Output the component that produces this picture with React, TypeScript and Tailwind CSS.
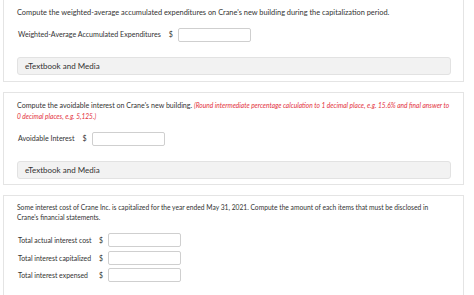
import React from "react";

const FONT = { fontFamily: "Lato, 'Open Sans', sans-serif" };

function AnswerInput() {
  return <div className="h-[14px] w-[73px] rounded-[2px] border border-[#cfcfcf] bg-white" />;
}

function MediaBox() {
  return (
    <div className="flex h-[18px] items-center rounded-[3px] border border-[#e2e2e2] bg-[#f2f2f2] px-[7px] text-[8px] text-[#333]">
      eTextbook and Media
    </div>
  );
}

const TOTALS = ["Total actual interest cost", "Total interest capitalized", "Total interest expensed"];

export default function App() {
  return (
    <div className="h-[295px] w-[474px] overflow-hidden bg-white pl-[3px] text-[7.1px] leading-[10px] text-[#333]" style={FONT}>
      {/* Part 1 */}
      <div className="w-[461px] border border-t-0 border-[#e4e4e4] pl-[13px] pr-[12px] pt-[8px] pb-[6px]">
        <p className="whitespace-nowrap text-[7.4px]">
          Compute the weighted-average accumulated expenditures on Crane's new building during the capitalization period.
        </p>
        <div className="mt-[10px] flex items-center">
          <span className="ml-[1px]">Weighted-Average Accumulated Expenditures</span>
          <span className="ml-[8px]">$</span>
          <div className="ml-[5px]">
            <AnswerInput />
          </div>
        </div>
        <div className="mt-[15px]">
          <MediaBox />
        </div>
      </div>

      {/* Part 2 */}
      <div className="mt-[10px] w-[461px] border border-[#e4e4e4] pl-[13px] pr-[12px] pt-[7px] pb-[5px]">
        <p className="whitespace-nowrap">
          Compute the avoidable interest on Crane's new building.{" "}
          <em className="text-[6.6px] text-[#e3303b]">
            (Round intermediate percentage calculation to 1 decimal place, e.g. 15.6% and final answer to
            <br />0 decimal places, e.g. 5,125.)
          </em>
        </p>
        <div className="mt-[10px] flex items-center">
          <span className="ml-[1px]">Avoidable Interest</span>
          <span className="ml-[8px]">$</span>
          <div className="ml-[5px]">
            <AnswerInput />
          </div>
        </div>
        <div className="mt-[15px]">
          <MediaBox />
        </div>
      </div>

      {/* Part 3 */}
      <div className="mt-[10px] h-[120px] w-[461px] border border-[#e4e4e4] pl-[13px] pr-[12px] pt-[6px]">
        <p className="whitespace-nowrap text-[6.7px]">
          Some interest cost of Crane Inc. is capitalized for the year ended May 31, 2021. Compute the amount of each items that must be disclosed in
          <br />
          Crane's financial statements.
        </p>
        <div className="mt-[11px] flex flex-col gap-[3.5px] text-[6.9px]">
          {TOTALS.map((label) => (
            <div key={label} className="flex items-center">
              <span className="ml-[1px] w-[81px] whitespace-nowrap">{label}</span>
              <span>$</span>
              <div className="ml-[5px]">
                <AnswerInput />
              </div>
            </div>
          ))}
        </div>
      </div>
    </div>
  );
}
